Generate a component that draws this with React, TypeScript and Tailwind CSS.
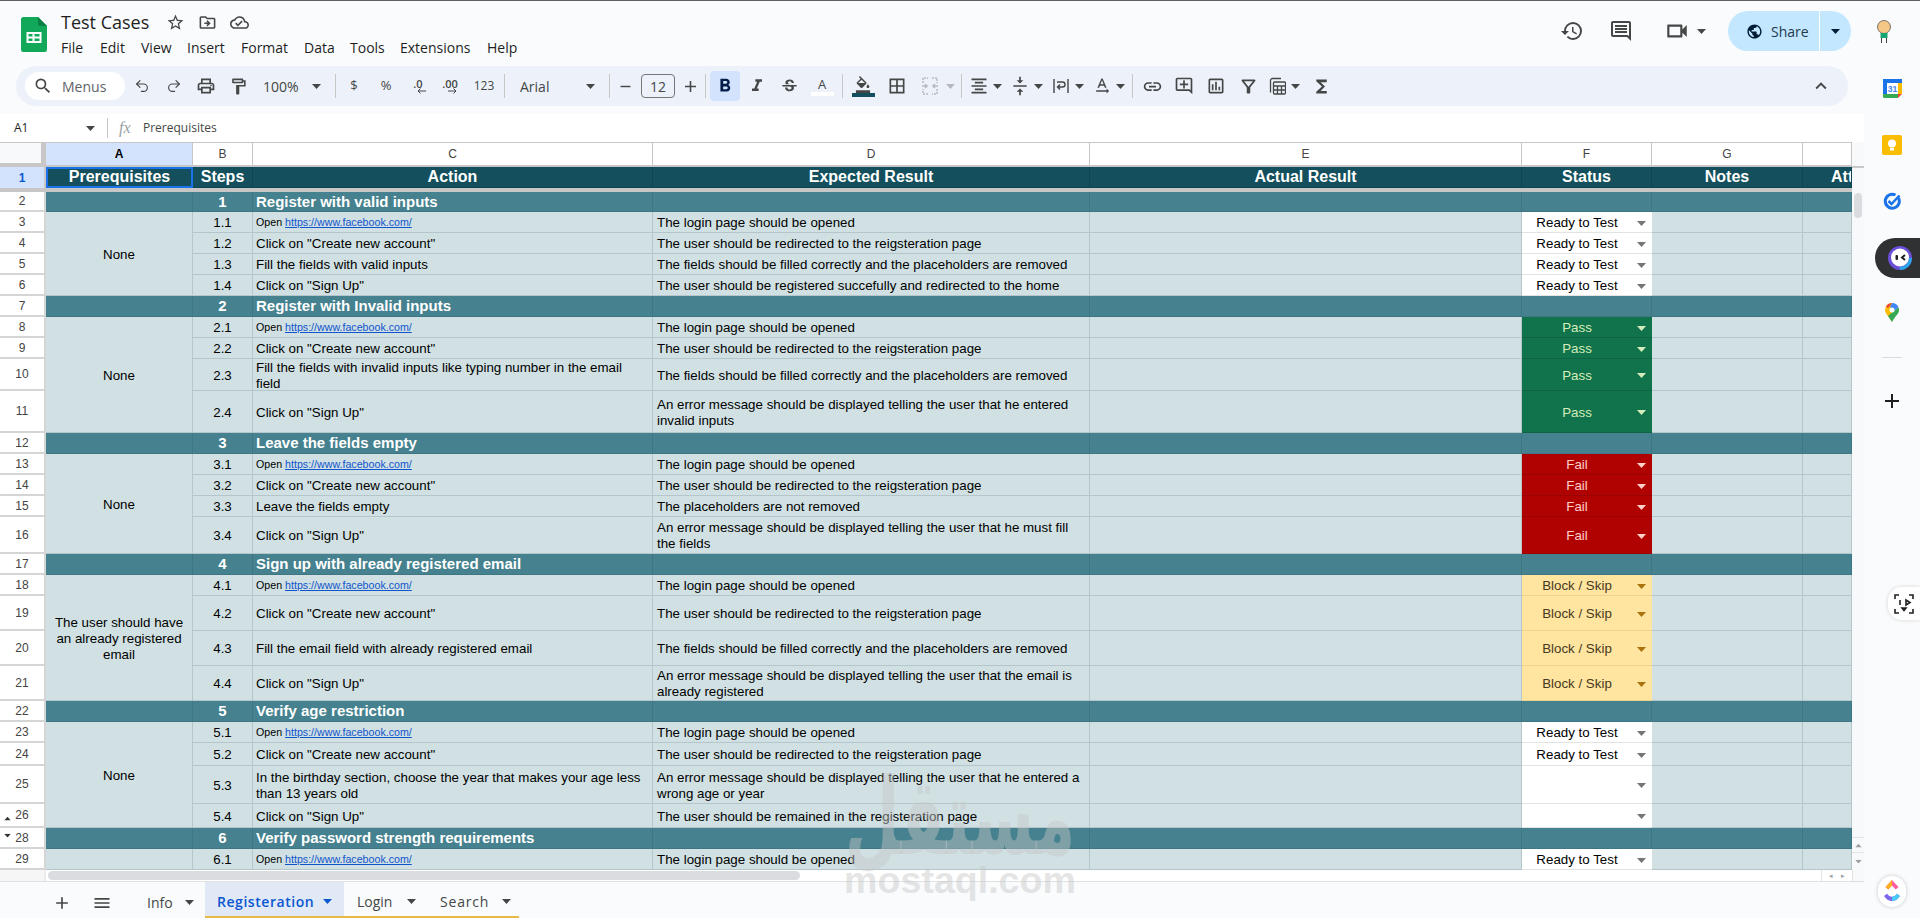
import {
  MdAdd, MdFormatAlignCenter, MdFormatBold, MdFormatItalic, MdFunctions, MdHistory, MdKeyboardArrowUp, MdLink, MdMenu,
  MdOutlineAddComment, MdOutlineBorderAll, MdOutlineCloudDone, MdOutlineComment, MdOutlineDriveFileMove, MdOutlineFilterAlt,
  MdOutlineFormatColorFill, MdOutlineFormatPaint, MdOutlineInsertChart, MdOutlinePrint, MdOutlineVideocam, MdPublic,
  MdRemove, MdSearch, MdStarBorder, MdStrikethroughS, MdTextRotationNone, MdVerticalAlignCenter,
} from "react-icons/md";
import { Redo2, Undo2 } from "lucide-react";
import type { ReactNode } from "react";

const LINK = "https://www.facebook.com/";
const OPEN = "The login page should be opened";
const CREATE = 'Click on "Create new account"';
const REDIRECT = "The user should be redirected to the reigsteration page";
const FILLED = "The fields should be filled correctly and the placeholders are removed";
const SIGNUP = 'Click on "Sign Up"';

type Status = "ready" | "pass" | "fail" | "block" | "empty";
type Row = { n: number; step: string; action?: string; expected?: string; status: Status; link?: boolean };
type Group = { n: number; step: string; title: string; prereq: ReactNode; span: string; rows: Row[] };

const groups: Group[] = [
  { n: 2, step: "1", title: "Register with valid inputs", prereq: "None", span: "row-span-4", rows: [
    { n: 3, step: "1.1", link: true, expected: OPEN, status: "ready" },
    { n: 4, step: "1.2", action: CREATE, expected: REDIRECT, status: "ready" },
    { n: 5, step: "1.3", action: "Fill the fields with valid inputs", expected: FILLED, status: "ready" },
    { n: 6, step: "1.4", action: SIGNUP, expected: "The user should be registered succefully and redirected to the home", status: "ready" },
  ] },
  { n: 7, step: "2", title: "Register with Invalid inputs", prereq: "None", span: "row-span-4", rows: [
    { n: 8, step: "2.1", link: true, expected: OPEN, status: "pass" },
    { n: 9, step: "2.2", action: CREATE, expected: REDIRECT, status: "pass" },
    { n: 10, step: "2.3", action: "Fill the fields with invalid inputs like typing number in the email field", expected: FILLED, status: "pass" },
    { n: 11, step: "2.4", action: SIGNUP, expected: "An error message should be displayed telling the user that he entered invalid inputs", status: "pass" },
  ] },
  { n: 12, step: "3", title: "Leave the fields empty", prereq: "None", span: "row-span-4", rows: [
    { n: 13, step: "3.1", link: true, expected: OPEN, status: "fail" },
    { n: 14, step: "3.2", action: CREATE, expected: REDIRECT, status: "fail" },
    { n: 15, step: "3.3", action: "Leave the fields empty", expected: "The placeholders are not removed", status: "fail" },
    { n: 16, step: "3.4", action: SIGNUP, expected: "An error message should be displayed telling the user that he must fill the fields", status: "fail" },
  ] },
  { n: 17, step: "4", title: "Sign up with already registered email", prereq: "The user should have an already registered email", span: "row-span-4", rows: [
    { n: 18, step: "4.1", link: true, expected: OPEN, status: "block" },
    { n: 19, step: "4.2", action: CREATE, expected: REDIRECT, status: "block" },
    { n: 20, step: "4.3", action: "Fill the email field with already registered email", expected: FILLED, status: "block" },
    { n: 21, step: "4.4", action: SIGNUP, expected: "An error message should be displayed telling the user that the email is already registered", status: "block" },
  ] },
  { n: 22, step: "5", title: "Verify age restriction", prereq: "None", span: "row-span-4", rows: [
    { n: 23, step: "5.1", link: true, expected: OPEN, status: "ready" },
    { n: 24, step: "5.2", action: CREATE, expected: REDIRECT, status: "ready" },
    { n: 25, step: "5.3", action: "In the birthday section, choose the year that makes your age less than 13 years old", expected: "An error message should be displayed telling the user that he entered a wrong age or year", status: "empty" },
    { n: 26, step: "5.4", action: SIGNUP, expected: "The user should be remained in the registeration page", status: "empty" },
  ] },
  { n: 28, step: "6", title: "Verify password strength requirements", prereq: "", span: "row-span-1", rows: [
    { n: 29, step: "6.1", link: true, expected: OPEN, status: "ready" },
  ] },
];

const statusStyle: Record<Status, { cell: string; label: string; caret: string }> = {
  ready: { cell: "bg-white text-black border-b-[#e2e3e3]", label: "Ready to Test", caret: "text-[#757575]" },
  empty: { cell: "bg-white text-black border-b-[#e2e3e3]", label: "", caret: "text-[#757575]" },
  pass: { cell: "bg-[#11734b] text-[#d4edbc] border-b-[#0f6541]", label: "Pass", caret: "text-[#d4edbc]" },
  fail: { cell: "bg-[#b10202] text-[#ffcfc9] border-b-[#9c0202]", label: "Fail", caret: "text-[#ffcfc9]" },
  block: { cell: "bg-[#ffe5a0] text-[#473821] border-b-[#ecd48f]", label: "Block / Skip", caret: "text-[#a9720e]" },
};

const Caret = ({ className = "" }: { className?: string }) => (
  <svg width="9" height="5" viewBox="0 0 9 5" className={className}><polygon points="0,0 9,0 4.5,5" fill="currentColor" /></svg>
);

const Sep = ({ className }: { className: string }) => <div className={`h-[24px] w-px shrink-0 bg-[#c7c7c7] ${className}`} />;

const Btn = ({ w = "w-8", children }: { w?: string; children: ReactNode }) => (
  <div className={`flex h-[30px] shrink-0 items-center justify-center text-[#444746] ${w}`}>{children}</div>
);

const Drop = ({ children }: { children: ReactNode }) => (
  <div className="flex h-[30px] shrink-0 items-center text-[#444746]">
    <div className="flex w-[24px] justify-center">{children}</div>
    <div className="flex w-[12px] justify-center"><Caret /></div>
  </div>
);

const SheetsLogo = () => (
  <svg width="26" height="35" viewBox="0 0 26 35" className="mt-4 shrink-0">
    <path d="M2.5 0H17l9 9v23.5a2.5 2.5 0 0 1-2.500 2.500h-21A2.500 2.500 0 0 1 0 32.500v-30A2.500 2.500 0 0 1 2.500 0z" fill="#11a85a" />
    <path d="M17 0l9 9h-7a2 2 0 0 1-2-2z" fill="#0b8043" />
    <path d="M5.500 15h15v11h-15z M7.500 17v2.500h4V17z M13.500 17v2.500h5V17z M7.500 21.500V24h4v-2.500z M13.500 21.500V24h5v-2.500z" fill="#fff" fillRule="evenodd" />
  </svg>
);

const Avatar = () => (
  <svg width="16" height="24" viewBox="0 0 16 24" className="mr-[16px]">
    <circle cx="8" cy="7" r="6.500" fill="#f5c785" stroke="#444" strokeWidth="0.700" />
    <rect x="4.500" y="13" width="7" height="5" fill="#17a673" />
    <path d="M5.500 18v5M10.500 18v5" stroke="#444" strokeWidth="1" />
  </svg>
);

const CalendarIcon = () => (
  <svg width="19" height="19" viewBox="0 0 19 19">
    <rect width="19" height="19" rx="1.500" fill="#fff" />
    <path d="M0 0h19v4H4v11H0z" fill="#1a73e8" />
    <path d="M15 4h4v11h-4z" fill="#fbbc04" />
    <path d="M0 15h15v4H1.500A1.500 1.500 0 0 1 0 17.500z" fill="#34a853" />
    <path d="M15 15h4l-4 4z" fill="#ea4335" />
    <text x="9.500" y="13" textAnchor="middle" fontSize="8.500" fontWeight="700" fill="#4285f4" fontFamily="Liberation Sans, sans-serif">31</text>
  </svg>
);

const KeepIcon = () => (
  <svg width="20" height="20" viewBox="0 0 20 20">
    <rect width="20" height="20" rx="2" fill="#fbbc04" />
    <circle cx="10" cy="8.500" r="4" fill="#fff" />
    <rect x="8" y="13" width="4" height="2.500" fill="#fff" />
  </svg>
);

const TasksIcon = () => (
  <svg width="19" height="19" viewBox="0 0 19 19">
    <path d="M15.500 6a7 7 0 1 1-3-3" fill="none" stroke="#1a73e8" strokeWidth="3" />
    <path d="M5.500 9l3 3 8-8.500" fill="none" stroke="#1a73e8" strokeWidth="2.500" />
  </svg>
);

const MapsIcon = () => (
  <svg width="14" height="19" viewBox="0 0 14 19">
    <path d="M7 0a7 7 0 0 0-7 7c0 4 4 6 7 12z" fill="#fbbc04" />
    <path d="M7 19c3-6 7-8 7-12 0-1-.200-2-.600-2.800L3 13z" fill="#34a853" />
    <path d="M1 3.500A7 7 0 0 1 7 0L3 5z" fill="#ea4335" />
    <path d="M7 0a7 7 0 0 1 6.400 4.200L9 8 5 4z" fill="#4285f4" />
    <circle cx="7" cy="7" r="2.500" fill="#fff" />
  </svg>
);

const BotIcon = () => (
  <svg width="24" height="24" viewBox="0 0 24 24">
    <circle cx="12" cy="12" r="12" fill="#6a4fd8" />
    <path d="M12 24a12 12 0 0 0 12-12h-3a9 9 0 0 1-9 9z" fill="#2aa5e8" />
    <circle cx="12" cy="11.500" r="9" fill="#fff" />
    <rect x="7.500" y="9" width="2.500" height="5" rx="1" fill="#202124" />
    <path d="M17 9l-3 2.500 3 2.500" stroke="#202124" strokeWidth="2" fill="none" />
  </svg>
);

const ClickUpIcon = () => (
  <svg width="18" height="24" viewBox="0 0 18 24">
    <path d="M9 0l6.500 7-2.800 2.500L9 5.500 5.300 9.500 2.500 7z" fill="#ff5fa0" />
    <path d="M2.500 7l2.800 2.500L9 5.500V0z" fill="#ffb020" />
    <path d="M1 16l3-2.300c1.500 2 3 3 5 3s3.500-1 5-3l3 2.300c-2 3-4.700 5-8 5s-6-2-8-5z" fill="#7b68ee" />
    <path d="M9 16.700c2 0 3.500-1 5-3l3 2.300c-2 3-4.700 5-8 5z" fill="#49ccf9" />
  </svg>
);

const Toolbar = () => (
  <div className="mt-0 flex h-[40px] w-[1832px] ml-[16px] shrink-0 items-center rounded-[20px] bg-[#edf2fa] pl-[9px] pr-[16px]">
    <div className="flex h-[28px] w-[100px] shrink-0 items-center rounded-full bg-white pl-[8px] text-[14px] text-[#5f6368] font-['Open_Sans',sans-serif]">
      <MdSearch className="text-[20px] text-[#444746]" />
      <span className="ml-[9px]">Menus</span>
    </div>
    <div className="ml-px" />
    <Btn><Undo2 size={16} strokeWidth={1.7} /></Btn>
    <Btn><Redo2 size={16} strokeWidth={1.7} /></Btn>
    <Btn><MdOutlinePrint className="text-[20px]" /></Btn>
    <Btn><MdOutlineFormatPaint className="text-[19px]" /></Btn>
    <div className="flex h-[30px] w-[75px] shrink-0 items-center pl-[9px] text-[14px] text-[#444746] font-['Open_Sans',sans-serif]">
      <span>100%</span>
      <Caret className="ml-[13px]" />
    </div>
    <Sep className="ml-[6px] mr-[2px]" />
    <Btn><span className="text-[13px] font-['Open_Sans',sans-serif]">$</span></Btn>
    <Btn><span className="text-[13px] font-['Open_Sans',sans-serif]">%</span></Btn>
    <Btn>
      <div className="flex flex-col items-center leading-[9px]">
        <span className="text-[11px] font-semibold font-['Open_Sans',sans-serif]">.0</span>
        <svg width="10" height="6" viewBox="0 0 10 6" className="ml-[6px]"><path d="M10 3H2M4.500 .5L2 3l2.500 2.500" stroke="currentColor" fill="none" /></svg>
      </div>
    </Btn>
    <Btn>
      <div className="flex flex-col items-center leading-[9px]">
        <span className="text-[11px] font-semibold font-['Open_Sans',sans-serif]">.00</span>
        <svg width="10" height="6" viewBox="0 0 10 6" className="ml-[6px]"><path d="M0 3h8M5.500 .5L8 3 5.500 5.500" stroke="currentColor" fill="none" /></svg>
      </div>
    </Btn>
    <div className="w-[2px] shrink-0" />
    <Btn><span className="text-[12px] font-['Open_Sans',sans-serif]">123</span></Btn>
    <Sep className="ml-[4px]" />
    <div className="flex h-[30px] w-[104px] shrink-0 items-center pl-[15px] text-[14px] text-[#444746] font-['Open_Sans',sans-serif]">
      <span className="w-[66px]">Arial</span>
      <Caret />
    </div>
    <Sep className="" />
    <Btn w="w-[31px]"><MdRemove className="text-[17px]" /></Btn>
    <div className="flex h-[24px] w-[34px] shrink-0 items-center justify-center rounded-[4px] border border-[#747775] text-[14px] text-[#444746] font-['Open_Sans',sans-serif]">12</div>
    <Btn w="w-[30px]"><MdAdd className="text-[19px]" /></Btn>
    <Sep className="mr-[4px]" />
    <div className="flex h-[30px] w-[30px] shrink-0 items-center justify-center rounded-[4px] bg-[#d3e3fd] text-[#041e49]"><MdFormatBold className="text-[22px]" /></div>
    <div className="w-[2px] shrink-0" />
    <Btn w="w-[30px]"><MdFormatItalic className="text-[20px]" /></Btn>
    <div className="w-[2px] shrink-0" />
    <Btn w="w-[30px]"><MdStrikethroughS className="text-[19px]" /></Btn>
    <div className="w-[2px] shrink-0" />
    <Btn>
      <div className="flex flex-col items-center">
        <span className="text-[13px] leading-[14px] font-['Open_Sans',sans-serif]">A</span>
        <div className="mt-[1px] h-[4px] w-[23px] bg-white" />
      </div>
    </Btn>
    <Sep className="ml-[4px]" />
    <div className="w-[4px] shrink-0" />
    <Btn>
      <div className="flex flex-col items-center">
        <MdOutlineFormatColorFill className="h-[17px] w-[20px]" />
        <div className="h-[4px] w-[23px] bg-[#134f5c]" />
      </div>
    </Btn>
    <div className="w-[2px] shrink-0" />
    <Btn><MdOutlineBorderAll className="text-[20px]" /></Btn>
    <div className="w-px shrink-0" />
    <Btn>
      <svg width="16" height="18" viewBox="0 0 16 18" fill="none" stroke="#b6b9bd" strokeWidth="1.500">
        <path d="M1 6V1h5M10 1h5v5M15 12v5h-5M6 17H1v-5" strokeDasharray="2 1" />
        <path d="M0 9h5M3 7l2 2-2 2M16 9h-5M13 7l-2 2 2 2" />
      </svg>
    </Btn>
    <Caret className="text-[#b6b9bd]" />
    <Sep className="ml-[6px] mr-[5px]" />
    <div className="flex shrink-0 gap-[5px]">
      <Drop><MdFormatAlignCenter className="text-[20px]" /></Drop>
      <Drop><MdVerticalAlignCenter className="text-[20px]" /></Drop>
      <Drop>
        <svg width="16" height="16" viewBox="0 0 16 16" fill="none" stroke="currentColor" strokeWidth="1.400">
          <path d="M1 1v14M15 1v14M4 4h5.500a2.500 2.500 0 0 1 0 5H5M7 6.500L4.500 9 7 11.500" />
        </svg>
      </Drop>
      <Drop><MdTextRotationNone className="text-[20px]" /></Drop>
    </div>
    <Sep className="ml-[6px] mr-[3px]" />
    <Btn><MdLink className="text-[21px]" /></Btn>
    <Btn><MdOutlineAddComment className="text-[20px]" /></Btn>
    <Btn><MdOutlineInsertChart className="text-[20px]" /></Btn>
    <Btn><MdOutlineFilterAlt className="text-[21px]" /></Btn>
    <div className="w-px shrink-0" />
    <Drop>
      <svg width="18" height="18" viewBox="0 0 18 18" fill="none" stroke="currentColor" strokeWidth="1.300">
        <path d="M2.500 15.500V3.500a2 2 0 0 1 2-2H13" />
        <rect x="5.500" y="5" width="12" height="12" rx="1" />
        <path d="M5.500 9h12M5.500 13h12M9.500 9v8M13.500 9v8" />
      </svg>
    </Drop>
    <div className="w-[4px] shrink-0" />
    <Btn><MdFunctions className="text-[21px]" /></Btn>
    <MdKeyboardArrowUp className="ml-auto text-[22px] text-[#444746]" />
  </div>
);

const Header = () => {
  const menus: [string, string][] = [
    ["File", "w-[39px]"], ["Edit", "w-[41px]"], ["View", "w-[46px]"], ["Insert", "w-[54px]"], ["Format", "w-[63px]"],
    ["Data", "w-[46px]"], ["Tools", "w-[50px]"], ["Extensions", "w-[87px]"], ["Help", "w-[40px]"],
  ];
  return (
    <div className="flex h-[65px] shrink-0 items-start pl-[21px] pr-[13px] font-['Open_Sans',sans-serif]">
      <SheetsLogo />
      <div className="ml-[14px] mt-[8px] flex flex-col">
        <div className="flex h-[26px] items-center text-[18px] text-[#1f1f1f]">
          <span className="w-[100px]">Test Cases</span>
          <MdStarBorder className="ml-[5px] text-[19px] text-[#444746]" />
          <MdOutlineDriveFileMove className="ml-[13px] text-[19px] text-[#444746]" />
          <MdOutlineCloudDone className="ml-[13px] text-[19px] text-[#444746]" />
        </div>
        <div className="flex h-[24px] items-center text-[14px] text-[#1f1f1f]">
          {menus.map(([m, w]) => <span key={m} className={w}>{m}</span>)}
        </div>
      </div>
      <div className="ml-auto mt-[10px] flex h-[40px] items-center text-[#444746]">
        <MdHistory className="text-[24px]" />
        <MdOutlineComment className="ml-[25px] text-[24px]" />
        <MdOutlineVideocam className="ml-[31px] text-[26px]" />
        <Caret className="ml-[7px]" />
        <div className="ml-[22px] flex h-[40px] w-[123px] items-center rounded-full bg-[#c2e7ff] text-[14px] text-[#001d35]">
          <MdPublic className="ml-[18px] text-[17px]" />
          <span className="ml-[8px] w-[48px] text-[#1f3a4d]">Share</span>
          <div className="h-[40px] w-px bg-white" />
          <Caret className="ml-[11px]" />
        </div>
      </div>
    </div>
  );
};

const FormulaBar = () => (
  <div className="flex h-[28px] shrink-0 items-center bg-white pl-[14px] text-[12px] text-[#444746] font-['Open_Sans',sans-serif]">
    <span className="w-[72px] text-[#1f1f1f]">A1</span>
    <Caret />
    <div className="ml-[12px] h-[20px] w-px bg-[#c7c7c7]" />
    <span className="ml-[11px] w-[24px] text-[16px] italic text-[#9aa0a6] font-['Liberation_Serif',serif]">fx</span>
    <span>Prerequisites</span>
  </div>
);

const ColHead = ({ label, className = "" }: { label: string; className?: string }) => (
  <div className={`flex items-center justify-center border-t border-r border-b-2 border-t-[#c7c7c7] border-r-[#c7c7c7] border-b-[#c7c7c7] text-[12px] text-[#444] ${className || "bg-white"}`}>{label}</div>
);

const TopCell = ({ label, className = "" }: { label: string; className?: string }) => (
  <div className={`flex items-center justify-center overflow-hidden whitespace-nowrap border-r border-b border-[#0f4552] bg-[#134f5c] pb-px text-[16px] font-bold text-white ${className}`}>{label}</div>
);

const RowNum = ({ n }: { n: number }) => (
  <div className="relative flex items-center justify-center border-r-2 border-b-2 border-[#d5d5d5] bg-white text-[12px] text-[#444]">
    {n === 26 && <Caret className="absolute left-[3px] bottom-[5px] scale-75 rotate-180 text-[#333]" />}
    {n === 28 && <Caret className="absolute left-[3px] top-[5px] scale-75 text-[#333]" />}
    {n}
  </div>
);

const GroupCell = ({ children, className = "" }: { children?: ReactNode; className?: string }) => (
  <div className={`flex items-center border-r border-b border-[#3f7683] bg-[#45818e] pt-px text-[15px] font-bold text-white ${className}`}>{children}</div>
);

const DataCell = ({ children, className = "" }: { children?: ReactNode; className?: string }) => (
  <div className={`flex items-center border-r border-b border-[#b4c6cb] bg-[#d0e0e3] pt-[2px] text-[13.33px] leading-[16px] text-black ${className}`}>{children}</div>
);

const StatusCell = ({ status }: { status: Status }) => {
  const s = statusStyle[status];
  return (
    <div className={`flex items-center border-b pl-px pr-[6px] pt-[2px] text-[13.33px] ${s.cell}`}>
      <span className="flex-1 pr-[6px] text-center">{s.label}</span>
      <Caret className={s.caret} />
    </div>
  );
};

const Grid = () => (
  <div className="grid w-[1852px] shrink-0 grid-cols-[46px_147px_60px_400px_437px_432px_130px_151px_49px] grid-rows-[25px_21px_4px_20px_21px_21px_21px_21px_21px_21px_21px_32px_42px_21px_21px_21px_21px_37px_21px_21px_35px_35px_35px_21px_21px_23px_38px_24px_21px_21px] overflow-hidden font-['Liberation_Sans',Arial,sans-serif]">
    <div className="border-t border-t-[#c7c7c7] border-r-[5px] border-b-[4px] border-r-[#c7c7c7] border-b-[#c7c7c7] bg-[#f8f9fa]" />
    <ColHead label="A" className="bg-[#d3e3fd] font-bold text-black" />
    <ColHead label="B" /><ColHead label="C" /><ColHead label="D" /><ColHead label="E" /><ColHead label="F" /><ColHead label="G" /><ColHead label="" />

    <div className="flex items-center justify-center border-r-[2px] border-[#c7c7c7] bg-[#d3e3fd] text-[12px] font-bold text-[#0b57d0]">1</div>
    <div className="flex items-center justify-center border-2 border-[#1a73e8] bg-[#134f5c] pb-px text-[16px] font-bold text-white">Prerequisites</div>
    <TopCell label="Steps" /><TopCell label="Action" /><TopCell label="Expected Result" /><TopCell label="Actual Result" /><TopCell label="Status" /><TopCell label="Notes" />
    <TopCell label="Attachments" className="justify-start pl-[28px]" />

    <div className="col-span-9 bg-[#c7c7c7]" />

    {groups.map((g) => (
      <div key={g.n} className="contents">
        <RowNum n={g.n} />
        <GroupCell />
        <GroupCell className="justify-center">{g.step}</GroupCell>
        <GroupCell className="pl-[3px]">{g.title}</GroupCell>
        <GroupCell /><GroupCell /><GroupCell /><GroupCell /><GroupCell />
        {g.rows.map((r, i) => (
          <div key={r.n} className="contents">
            <RowNum n={r.n} />
            {i === 0 && <DataCell className={`justify-center px-[4px] text-center ${g.span}`}>{g.prereq}</DataCell>}
            <DataCell className="justify-center">{r.step}</DataCell>
            <DataCell className="px-[3px]">
              {r.link ? (
                <span className="-mt-[3px] text-[10.67px] whitespace-nowrap">Open <span className="text-[#1155cc] underline">{LINK}</span></span>
              ) : r.action}
            </DataCell>
            <DataCell className="pl-[4px] pr-[3px]">{r.expected}</DataCell>
            <DataCell />
            <StatusCell status={r.status} />
            <DataCell /><DataCell />
          </div>
        ))}
      </div>
    ))}
  </div>
);

const ScrollColumn = () => (
  <div className="relative flex flex-1 flex-col bg-[#f8f9fa]">
    <div className="mt-[24px] h-[2px] bg-[#c7c7c7]" />
    <div className="absolute top-[51px] left-[2px] h-[25px] w-[8px] rounded-full bg-[#dadce0]" />
    <div className="mt-auto flex h-[16px] items-center justify-center border-y border-[#e3e3e3]"><Caret className="rotate-180 scale-75 text-[#9aa0a6]" /></div>
    <div className="flex h-[17px] items-center justify-center"><Caret className="scale-75 text-[#9aa0a6]" /></div>
  </div>
);

const HScroll = () => (
  <div className="flex h-[12px] shrink-0 items-center border-b border-[#e0e0e0] bg-white">
    <div className="h-full w-[46px] border-r-2 border-[#ececec] bg-[#f6f6f6]" />
    <div className="ml-[2px] h-[9px] w-[752px] rounded-full bg-[#dadce0]" />
    <div className="ml-auto flex h-full w-[32px] items-center justify-evenly border-x border-[#e3e3e3] text-[#9aa0a6]">
      <span className="text-[7px] leading-none">◂</span><span className="text-[7px] leading-none">▸</span>
    </div>
    <div className="h-full w-[11px] bg-[#f8f9fa]" />
  </div>
);

const SheetTab = ({ label, caret, className }: { label: string; caret: string; className: string }) => (
  <div className={`flex h-full items-center pt-[5px] ${className}`}>
    <span>{label}</span>
    <Caret className={caret} />
  </div>
);

const Tabs = () => (
  <div className="flex h-[36px] shrink-0 items-center text-[14px] font-medium text-[#444746] font-['Open_Sans',sans-serif]">
    <MdAdd className="ml-[52px] mt-[5px] text-[20px]" />
    <MdMenu className="ml-[20px] mt-[5px] text-[20px]" />
    <SheetTab label="Info" caret="ml-[12px]" className="ml-[35px] w-[58px]" />
    <SheetTab label="Registeration" caret="ml-[9px]" className="w-[139px] border-b-2 border-[#e8b949] bg-[#e1e9f7] pl-[12px] font-semibold tracking-[0.55px] text-[#0b57d0]" />
    <SheetTab label="Login" caret="ml-[15px]" className="w-[82px] border-b-2 border-[#e8b949] pl-[13px]" />
    <SheetTab label="Search" caret="ml-[13px]" className="w-[93px] border-b-2 border-[#e8b949] pl-[14px] tracking-[0.8px]" />
  </div>
);

const SidePanel = () => (
  <div className="flex w-[56px] shrink-0 flex-col items-center">
    <div className="mt-[19px]"><Avatar /></div>
    <div className="mt-[35px]"><CalendarIcon /></div>
    <div className="mt-[37px]"><KeepIcon /></div>
    <div className="mt-[37px]"><TasksIcon /></div>
    <div className="mt-[27px] flex h-[40px] w-[45px] items-center self-end rounded-l-[20px] bg-[#2f3133] pl-[13px]"><BotIcon /></div>
    <div className="mt-[25px]"><MapsIcon /></div>
    <div className="mt-[35px] h-px w-[20px] bg-[#dadce0]" />
    <MdAdd className="mt-[31px] text-[24px] text-[#1f1f1f]" />
    <div className="mt-[174px] flex h-[33px] w-[32px] items-center justify-center self-end rounded-l-[14px] bg-white shadow-[0_0_4px_rgba(0,0,0,0.15)]">
      <svg width="20" height="20" viewBox="0 0 20 20" fill="none" stroke="#202124" strokeWidth="1.600">
        <path d="M1 5V1h4M15 1h4v4M19 15v4h-4M5 19H1v-4M6 6v5" />
        <path d="M12 6l4 2.500-4 2.500z" />
        <path d="M8 14h4l-2 2.500z" fill="#202124" />
      </svg>
    </div>
    <div className="mt-[256px] flex h-[31px] w-[28px] items-center justify-center rounded-full bg-white shadow-[0_0_4px_rgba(0,0,0,0.2)]"><ClickUpIcon /></div>
  </div>
);

export default function App() {
  return (
    <div className="relative flex h-[918px] w-[1920px] flex-col overflow-hidden bg-[#f9fbfd]">
      <div className="h-px shrink-0 bg-[#5f6360]" />
      <div className="flex min-h-0 flex-1">
        <div className="flex w-[1864px] shrink-0 flex-col">
          <Header />
          <Toolbar />
          <div className="h-[8px] shrink-0" />
          <FormulaBar />
          <div className="flex h-[728px] shrink-0">
            <Grid />
            <ScrollColumn />
          </div>
          <HScroll />
          <Tabs />
        </div>
        <SidePanel />
      </div>
      <div className="pointer-events-none absolute left-[845px] top-[790px] z-10 flex w-[230px] flex-col items-center text-[#c5c5c5]/45">
        <span dir="rtl" className="-mt-[6px] mb-[6px] h-[68px] scale-y-[1.7] text-[63px] leading-[68px] font-bold whitespace-nowrap font-['DejaVu_Sans',sans-serif]">مستقل</span>
        <span className="h-[44px] text-[37.6px] leading-[44px] font-bold font-['Liberation_Sans',sans-serif]">mostaql.com</span>
      </div>
    </div>
  );
}
